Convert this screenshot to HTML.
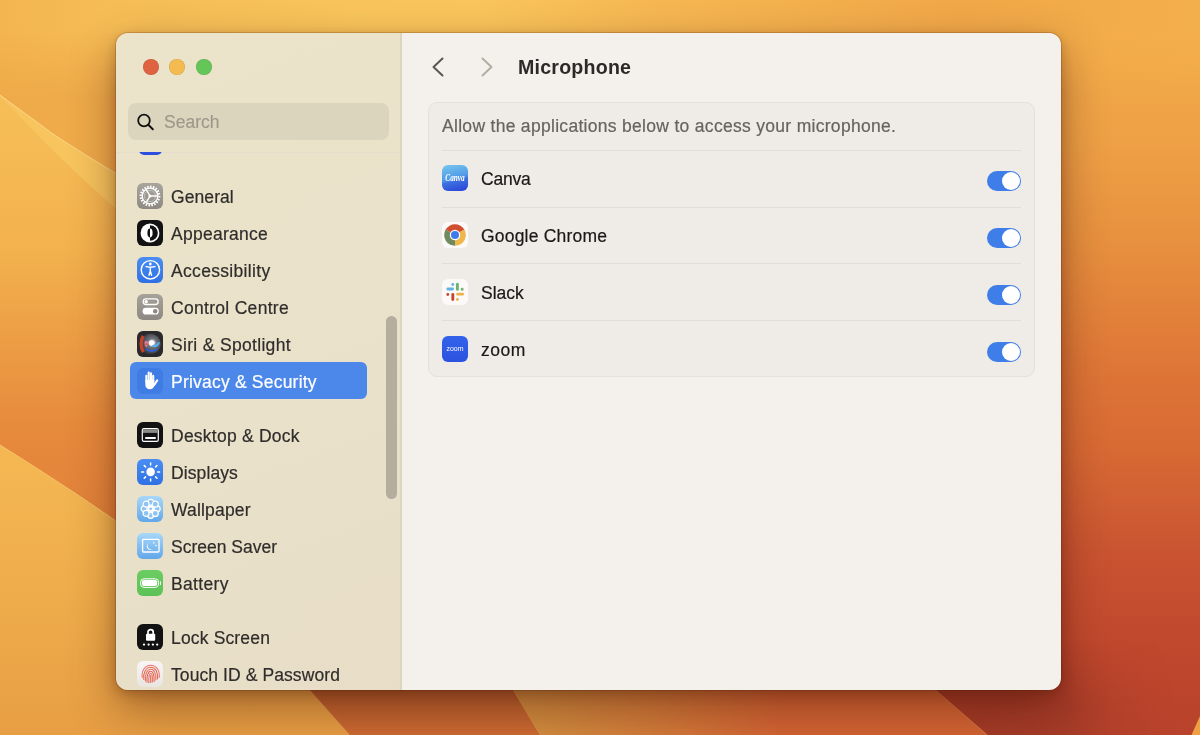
<!DOCTYPE html>
<html><head><meta charset="utf-8">
<style>
html,body{margin:0;padding:0;width:1200px;height:735px;overflow:hidden;background:#E99A44;font-family:"Liberation Sans",sans-serif;-webkit-font-smoothing:antialiased;}
#win{will-change:transform;}
#bg{position:absolute;left:0;top:0;width:1200px;height:735px;}
#win{position:absolute;left:116px;top:33px;width:945px;height:657px;border-radius:12px;overflow:hidden;box-shadow:0 0 0 1px rgba(80,30,0,.2),0 4px 12px rgba(60,15,0,.25),0 18px 46px rgba(60,15,0,.42);}
#side{position:absolute;left:0;top:0;width:284px;height:657px;background:linear-gradient(160deg,#EBE4CA 0%,#E9E1C9 55%,#E8DEC8 100%);}
#sep{position:absolute;left:284px;top:0;width:2px;height:657px;background:#DCD6BE;}
#main{position:absolute;left:286px;top:0;width:659px;height:657px;background:#F4F0EC;}
.tl{position:absolute;top:26px;width:16px;height:16px;border-radius:50%;box-shadow:inset 0 0 0 0.6px rgba(0,0,0,.12);}
#search{position:absolute;left:12px;top:70px;width:261px;height:37px;border-radius:8px;background:#DCD5BD;}
#search .ph{position:absolute;left:36px;top:1px;-webkit-text-stroke:0.15px currentColor;line-height:37px;font-size:17.5px;color:#9D988A;}
.it{position:absolute;left:21px;height:26px;}
.it svg{position:absolute;left:0;top:0;width:26px;height:26px;}
.it span{position:absolute;left:34px;top:0.5px;-webkit-text-stroke:0.2px currentColor;line-height:26px;font-size:17.5px;color:#2F2D2B;white-space:nowrap;}
#sel{position:absolute;left:14px;top:329px;width:237px;height:37px;border-radius:6px;background:#4C88EA;}
#scroll{position:absolute;left:270px;top:283px;width:11px;height:183px;border-radius:6px;background:#B5AE9F;}
.t{position:absolute;white-space:nowrap;}
#box{position:absolute;left:26px;top:69px;width:605px;height:273px;border-radius:9px;background:#EFEBE7;border:1px solid #E4E0DB;}
.hr{position:absolute;left:13px;width:579px;height:1px;background:#E1DDD8;}
.row{position:absolute;left:13px;width:580px;height:26px;}
.row svg.ic{position:absolute;left:0;top:0;width:26px;height:26px;}
.row span{position:absolute;left:39px;top:1px;-webkit-text-stroke:0.2px currentColor;line-height:26px;font-size:17.5px;color:#1A1918;white-space:nowrap;}
.tg{position:absolute;left:545px;top:6px;width:34px;height:20px;border-radius:10px;background:#3F7EE9;}
.tg i{position:absolute;right:1px;top:1px;width:18px;height:18px;border-radius:50%;background:#fff;}
</style></head>
<body>
<svg id="bg" viewBox="0 0 1200 735">
  <defs>
    <linearGradient id="gR" x1="0" y1="0" x2="0" y2="735" gradientUnits="userSpaceOnUse">
      <stop offset="0" stop-color="#F3AF4B"/>
      <stop offset="0.2" stop-color="#EEA045"/>
      <stop offset="0.34" stop-color="#E78F3E"/>
      <stop offset="0.5" stop-color="#DE7637"/>
      <stop offset="0.61" stop-color="#D86A34"/>
      <stop offset="0.75" stop-color="#C95431"/>
      <stop offset="0.88" stop-color="#BF482D"/>
      <stop offset="1" stop-color="#B8422B"/>
    </linearGradient>
    <linearGradient id="gTop" x1="0" y1="0" x2="1200" y2="0" gradientUnits="userSpaceOnUse">
      <stop offset="0" stop-color="#F3B54F"/>
      <stop offset="0.1" stop-color="#F6BD56"/>
      <stop offset="0.3" stop-color="#F9C55B"/>
      <stop offset="0.4" stop-color="#FAC55B"/>
      <stop offset="0.55" stop-color="#F6B752"/>
      <stop offset="0.8" stop-color="#F1A848"/>
      <stop offset="1" stop-color="#F3AF4B"/>
    </linearGradient>
    <linearGradient id="mTopG" x1="0" y1="0" x2="0" y2="100" gradientUnits="userSpaceOnUse">
      <stop offset="0.3" stop-color="#fff"/>
      <stop offset="1" stop-color="#000"/>
    </linearGradient>
    <mask id="mTop"><rect x="0" y="0" width="1200" height="100" fill="url(#mTopG)"/></mask>
    <linearGradient id="gL2" x1="0" y1="100" x2="0" y2="520" gradientUnits="userSpaceOnUse">
      <stop offset="0" stop-color="#F6BE58"/>
      <stop offset="0.35" stop-color="#F3B24E"/>
      <stop offset="0.78" stop-color="#E68A3C"/>
      <stop offset="1" stop-color="#E2823A"/>
    </linearGradient>
    <linearGradient id="gL3" x1="0" y1="445" x2="0" y2="735" gradientUnits="userSpaceOnUse">
      <stop offset="0" stop-color="#F4B853"/>
      <stop offset="0.5" stop-color="#EFAD4B"/>
      <stop offset="1" stop-color="#E79E44"/>
    </linearGradient>
    <linearGradient id="gB1" x1="0" y1="690" x2="0" y2="735" gradientUnits="userSpaceOnUse">
      <stop offset="0" stop-color="#B8602E"/>
      <stop offset="1" stop-color="#CE6B33"/>
    </linearGradient>
    <linearGradient id="gB2" x1="520" y1="0" x2="780" y2="0" gradientUnits="userSpaceOnUse">
      <stop offset="0" stop-color="#D29040"/>
      <stop offset="0.5" stop-color="#D27C3A"/>
      <stop offset="1" stop-color="#D26434"/>
    </linearGradient>
    <linearGradient id="mRedG" x1="0" y1="640" x2="0" y2="705" gradientUnits="userSpaceOnUse"><stop offset="0" stop-color="#000"/><stop offset="1" stop-color="#fff"/></linearGradient>
    <mask id="mRed"><rect x="0" y="600" width="1200" height="135" fill="url(#mRedG)"/></mask>
    <radialGradient id="gRed" cx="985" cy="720" r="190" gradientUnits="userSpaceOnUse">
      <stop offset="0" stop-color="#A33A27" stop-opacity="1"/>
      <stop offset="0.45" stop-color="#A63C28" stop-opacity="1"/>
      <stop offset="1" stop-color="#B8422B" stop-opacity="0"/>
    </radialGradient>
  </defs>
  <rect x="0" y="0" width="1200" height="735" fill="url(#gR)"/>
  <rect x="0" y="0" width="600" height="735" fill="#EFAA49"/>
  <rect x="0" y="0" width="1200" height="100" fill="url(#gTop)" mask="url(#mTop)"/>
  <!-- left strip -->
  <path d="M0,95 C20,110 40,124 50,132 C80,152 110,170 160,200 L160,735 L0,735 Z" fill="url(#gL2)"/>
  <path d="M0,95 C20,110 40,124 50,132 C80,152 110,170 160,200 L160,245 C120,215 60,160 0,96 Z" fill="#F7C45D"/>
  <path d="M0,95 C20,110 40,124 50,132 C80,152 110,170 160,200" fill="none" stroke="#FBD889" stroke-width="1"/>
  <path d="M0,445 C40,470 80,496 116,521 L160,551 L160,650 L290,650 L310,690 L350,735 L0,735 Z" fill="url(#gL3)"/>
  <path d="M0,445 C40,470 80,496 116,521" fill="none" stroke="#F6C468" stroke-width="1"/>
  <path d="M310,690 L350,735" stroke="#D9954A" stroke-width="1"/>
  <!-- bottom strip -->
  <path d="M290,650 L495,650 L513,690 L540,735 L350,735 L310,690 Z" fill="url(#gB1)"/>
  <path d="M495,650 L900,650 L935,690 L987,735 L540,735 L513,690 Z" fill="url(#gB2)"/>
  <path d="M880,640 L1200,640 L1200,735 L987,735 L935,690 Z" fill="url(#gRed)" mask="url(#mRed)"/>
  <path d="M935,690 L987,735" stroke="#D8703A" stroke-width="1.2"/>
  <path d="M1200,716 L1200,735 L1191.5,735 Z" fill="#EFA043"/>
</svg>

<div id="win">
  <div id="side">
    <div class="tl" style="left:27px;background:#DF6341;"></div>
    <div class="tl" style="left:53px;background:#F5BB50;"></div>
    <div class="tl" style="left:79.5px;background:#64C659;"></div>
    <div id="search">
      <svg style="position:absolute;left:8px;top:9px;width:20px;height:20px" viewBox="0 0 20 20"><circle cx="8" cy="8.5" r="5.8" fill="none" stroke="#111" stroke-width="1.8"/><path d="M12.3,12.8 L16.8,17.2" stroke="#111" stroke-width="2" stroke-linecap="round"/></svg>
      <span class="ph">Search</span>
    </div>
    <div style="position:absolute;left:0;top:119px;width:284px;height:1px;background:#E6DECA;"></div>
    <div style="position:absolute;left:23px;top:117px;width:23px;height:5px;border-radius:0 0 5px 5px;background:#2D4FE0;clip-path:inset(2px 0 0 0);"></div>

    <div id="sel"></div>
    <div id="scroll"></div>
    <div id="items">
<div class="it" style="top:150px"><svg viewBox="0 0 26 26"><defs><linearGradient id="ggen" x1="0" y1="0" x2="0" y2="1"><stop offset="0" stop-color="#A9A59D"/><stop offset="1" stop-color="#8E8A83"/></linearGradient></defs>
<rect x="0" y="0" width="26" height="26" rx="6" fill="url(#ggen)"/>
<circle cx="13" cy="13" r="9.3" fill="none" stroke="#fff" stroke-width="2.2" stroke-dasharray="1.6 1.3"/>
<circle cx="13" cy="13" r="7.8" fill="none" stroke="#fff" stroke-width="1.3"/>
<circle cx="13" cy="13" r="5.6" fill="none" stroke="#C9C6C0" stroke-width="0.8"/>
<path d="M13,13 L20.6,13 M13,13 L9.2,6.4 M13,13 L9.2,19.6" stroke="#fff" stroke-width="1.4"/>
<circle cx="13" cy="13" r="1.6" fill="#fff"/></svg><span style="letter-spacing:0.08px">General</span></div>
<div class="it" style="top:187px"><svg viewBox="0 0 26 26"><rect x="0" y="0" width="26" height="26" rx="6" fill="#121212"/>
<circle cx="13" cy="13" r="9.4" fill="#fff"/>
<path d="M13,5.2 A7.8,7.8 0 0 1 13,20.8 Z" fill="#121212"/>
<path d="M13,8.6 A2.6,4.4 0 0 0 13,17.4 Z" fill="#121212"/>
<path d="M13,8.6 A2.6,4.4 0 0 1 13,17.4 Z" fill="#fff"/></svg><span style="letter-spacing:0.26px">Appearance</span></div>
<div class="it" style="top:224px"><svg viewBox="0 0 26 26"><defs><linearGradient id="gacc" x1="0" y1="0" x2="0" y2="1"><stop offset="0" stop-color="#4A8EF2"/><stop offset="1" stop-color="#2F70E4"/></linearGradient></defs>
<rect x="0" y="0" width="26" height="26" rx="6" fill="url(#gacc)"/>
<circle cx="13.4" cy="12.8" r="9.2" fill="none" stroke="#fff" stroke-width="1.4"/>
<circle cx="13.3" cy="7" r="1.4" fill="#fff"/>
<path d="M9,9.6 L13.3,10.3 L18,9.6 M13.3,10.3 L13.3,14 L12,18.2 M13.3,14 L14.6,18.2" fill="none" stroke="#fff" stroke-width="1.4" stroke-linecap="round" stroke-linejoin="round"/></svg><span style="letter-spacing:0.32px">Accessibility</span></div>
<div class="it" style="top:261px"><svg viewBox="0 0 26 26"><defs><linearGradient id="gcc" x1="0" y1="0" x2="0" y2="1"><stop offset="0" stop-color="#A6A29A"/><stop offset="1" stop-color="#8D8982"/></linearGradient></defs>
<rect x="0" y="0" width="26" height="26" rx="6" fill="url(#gcc)"/>
<rect x="6.2" y="4.9" width="15" height="5.6" rx="2.8" fill="none" stroke="#fff" stroke-width="1.3"/>
<circle cx="9.2" cy="7.7" r="1.7" fill="#fff"/>
<rect x="5.6" y="13.8" width="16.2" height="6.8" rx="3.4" fill="#fff"/>
<circle cx="18.2" cy="17.2" r="2.2" fill="#8D8982"/></svg><span style="letter-spacing:0.3px">Control Centre</span></div>
<div class="it" style="top:298px"><svg viewBox="0 0 26 26"><defs><radialGradient id="gsiri" cx="0.58" cy="0.45" r="0.55"><stop offset="0" stop-color="#fff"/><stop offset="0.12" stop-color="#E8ECF2"/><stop offset="0.4" stop-color="#6E727C"/><stop offset="1" stop-color="#3A3B40"/></radialGradient><filter id="fsiri" x="-20%" y="-20%" width="140%" height="140%"><feGaussianBlur stdDeviation="0.6"/></filter></defs>
<rect x="0" y="0" width="26" height="26" rx="6" fill="#2A2A2C"/>
<circle cx="13.5" cy="13" r="10.2" fill="url(#gsiri)"/>
<g filter="url(#fsiri)">
<path d="M6.2,5 C3.2,9.5 3.4,16.5 6.4,21" fill="none" stroke="#C8432A" stroke-width="3.2"/>
<path d="M8,10 C7,12 7.5,15 9.5,16.5 C10.5,14.5 11.5,12 11.8,10.5 Z" fill="#E47AA0"/>
<path d="M8.5,14 C9.5,12.5 10.5,12.5 11.5,14" stroke="#D25A3A" stroke-width="1.2" fill="none"/>
<circle cx="14.6" cy="12" r="2.8" fill="#fff"/>
<path d="M15.5,14.4 C18,16 21,14.6 22,11.2" fill="none" stroke="#56AEF4" stroke-width="2.2"/>
<path d="M9,17.8 C11.5,20.8 17,20.8 20.2,18" fill="none" stroke="#2D5DE6" stroke-width="1.6"/>
</g></svg><span style="letter-spacing:0.32px">Siri &amp; Spotlight</span></div>
<div class="it" style="top:335px"><svg viewBox="0 0 26 26"><rect x="0" y="0" width="26" height="26" rx="6" fill="#3F7CE4"/>
<g stroke="#fff" stroke-width="2.1" stroke-linecap="round" fill="none">
<path d="M9.4,14 L9.4,7.7"/><path d="M11.7,13 L11.7,4.5"/><path d="M14,13 L14,5.4"/><path d="M16.2,14 L16.2,7.9"/><path d="M17.2,17 L20.2,12.4"/></g>
<path d="M8.35,12 L17.3,12 L17.3,17 C17.3,19.6 15.5,21.2 12.9,21.2 C10.2,21.2 8.35,19.5 8.35,17 Z" fill="#fff"/></svg><span style="color:#fff;letter-spacing:0.21px">Privacy &amp; Security</span></div>
<div class="it" style="top:389px"><svg viewBox="0 0 26 26"><rect x="0" y="0" width="26" height="26" rx="6" fill="#121212"/>
<rect x="5.3" y="6.7" width="16" height="12.6" rx="1.6" fill="none" stroke="#fff" stroke-width="1.2"/>
<rect x="5.9" y="7.3" width="14.8" height="3.6" fill="#8E8C88"/>
<rect x="8" y="15" width="11" height="2" rx="1" fill="#fff"/></svg><span style="letter-spacing:0.24px">Desktop &amp; Dock</span></div>
<div class="it" style="top:426px"><svg viewBox="0 0 26 26"><defs><linearGradient id="gdisp" x1="0" y1="0" x2="0" y2="1"><stop offset="0" stop-color="#4A8EF2"/><stop offset="1" stop-color="#2F70E4"/></linearGradient></defs>
<rect x="0" y="0" width="26" height="26" rx="6" fill="url(#gdisp)"/>
<circle cx="13.6" cy="12.9" r="4.3" fill="#fff"/>
<g stroke="#fff" stroke-width="1.5" stroke-linecap="round">
<path d="M13.6,3.9 L13.6,5.9 M13.6,19.9 L13.6,21.9 M4.6,12.9 L6.6,12.9 M20.6,12.9 L22.6,12.9 M7.2,6.5 L8.6,7.9 M18.6,17.9 L20,19.3 M7.2,19.3 L8.6,17.9 M18.6,7.9 L20,6.5"/></g></svg><span style="letter-spacing:0.1px">Displays</span></div>
<div class="it" style="top:463px"><svg viewBox="0 0 26 26"><defs><linearGradient id="gwal" x1="0" y1="0" x2="0" y2="1"><stop offset="0" stop-color="#A8D7F8"/><stop offset="1" stop-color="#62A7EA"/></linearGradient></defs>
<rect x="0" y="0" width="26" height="26" rx="6" fill="url(#gwal)"/>
<g fill="#8EC4F2" stroke="#fff" stroke-width="1.2">
<circle cx="13.7" cy="6.3" r="3"/><circle cx="13.7" cy="19.3" r="3"/><circle cx="7.2" cy="12.8" r="3"/><circle cx="20.2" cy="12.8" r="3"/>
<circle cx="9.1" cy="8.2" r="3"/><circle cx="18.3" cy="8.2" r="3"/><circle cx="9.1" cy="17.4" r="3"/><circle cx="18.3" cy="17.4" r="3"/></g>
<circle cx="13.7" cy="12.8" r="3.2" fill="#fff"/><circle cx="13.7" cy="12.8" r="1.4" fill="#8EC4F2"/></svg><span style="letter-spacing:0.18px">Wallpaper</span></div>
<div class="it" style="top:500px"><svg viewBox="0 0 26 26"><defs><linearGradient id="gss" x1="0" y1="0" x2="0" y2="1"><stop offset="0" stop-color="#A8D7F8"/><stop offset="1" stop-color="#62A7EA"/></linearGradient></defs>
<rect x="0" y="0" width="26" height="26" rx="6" fill="url(#gss)"/>
<rect x="5.6" y="6.4" width="16.4" height="12.6" rx="0.8" fill="none" stroke="#fff" stroke-width="1.3"/>
<path d="M12.2,9.6 A3.8,3.8 0 1 0 16.4,15.6 A3.2,3.2 0 0 1 12.2,9.6 Z" fill="#fff"/>
<circle cx="16.8" cy="9.8" r="0.8" fill="#fff"/><circle cx="19" cy="12.6" r="0.8" fill="#fff"/></svg><span style="letter-spacing:0px">Screen Saver</span></div>
<div class="it" style="top:537px"><svg viewBox="0 0 26 26"><defs><linearGradient id="gbat" x1="0" y1="0" x2="0" y2="1"><stop offset="0" stop-color="#6BCC62"/><stop offset="1" stop-color="#5DC256"/></linearGradient></defs>
<rect x="0" y="0" width="26" height="26" rx="6" fill="url(#gbat)"/>
<rect x="3.6" y="8.8" width="18" height="8.6" rx="3.4" fill="none" stroke="#fff" stroke-width="1"/>
<rect x="4.9" y="9.9" width="15.3" height="6" rx="2.2" fill="#fff"/>
<rect x="23" y="11.3" width="1" height="3.7" rx="0.5" fill="#fff"/></svg><span style="letter-spacing:0.35px">Battery</span></div>
<div class="it" style="top:591px"><svg viewBox="0 0 26 26"><rect x="0" y="0" width="26" height="26" rx="6" fill="#121212"/>
<path d="M11,10.5 L11,8 C11,4.7 16.2,4.7 16.2,8 L16.2,10.5" fill="none" stroke="#fff" stroke-width="1.7"/>
<rect x="9" y="9.8" width="9.2" height="6.9" rx="1" fill="#fff"/>
<g fill="#fff"><circle cx="7" cy="20.6" r="1.15"/><circle cx="11.6" cy="20.6" r="1.15"/><circle cx="15.9" cy="20.6" r="1.15"/><circle cx="20.2" cy="20.6" r="1.15"/></g></svg><span style="letter-spacing:0.16px">Lock Screen</span></div>
<div class="it" style="top:628px"><svg viewBox="0 0 26 26"><defs><linearGradient id="gtid" x1="0" y1="0" x2="0" y2="1"><stop offset="0" stop-color="#F8F6F4"/><stop offset="1" stop-color="#E9E5E1"/></linearGradient></defs>
<rect x="0" y="0" width="26" height="26" rx="6" fill="url(#gtid)"/>
<g fill="none" stroke-width="1.1" stroke-linecap="round">
<path d="M5.2,16.5 C4.4,9 8.5,4.2 13.7,4.2 C19,4.2 23,9 22.2,16.5" stroke="#E8707C"/>
<path d="M6.8,18.5 C6,11.5 9,6.2 13.7,6.2 C18.4,6.2 21.2,11 20.5,18" stroke="#E5683A"/>
<path d="M8.4,20 C7.8,13 10.2,8.2 13.7,8.2 C17.2,8.2 19.2,12.5 18.8,19" stroke="#E8707C"/>
<path d="M10,21.2 C9.6,14.5 11.3,10.2 13.7,10.2 C16,10.2 17.3,13.5 17.1,20.5" stroke="#E5683A"/>
<path d="M11.8,21.6 C11.5,16 12.3,12.2 13.7,12.2 C15,12.2 15.6,15 15.4,21" stroke="#E8707C"/>
<path d="M13.7,14.5 L13.7,21.5" stroke="#E5683A"/>
</g></svg><span style="letter-spacing:0.09px">Touch ID &amp; Password</span></div>
</div>
  </div>
  <div id="sep"></div>
  <div id="main">
    <svg style="position:absolute;left:28px;top:22px;width:16px;height:24px" viewBox="0 0 16 24"><path d="M12.5,3.5 L3.5,12 L12.5,20.5" fill="none" stroke="#5A5650" stroke-width="2" stroke-linecap="round" stroke-linejoin="round"/></svg>
    <svg style="position:absolute;left:77px;top:22px;width:16px;height:24px" viewBox="0 0 16 24"><path d="M3.5,3.5 L12.5,12 L3.5,20.5" fill="none" stroke="#B3ADA3" stroke-width="2" stroke-linecap="round" stroke-linejoin="round"/></svg>
    <div class="t" style="left:116px;top:22px;line-height:24px;font-size:19.6px;font-weight:bold;color:#2C2A28;letter-spacing:0.22px;">Microphone</div>
    <div id="box">
      <div class="t" style="left:13px;top:11px;-webkit-text-stroke:0.2px currentColor;line-height:24px;font-size:17.5px;color:#67635E;letter-spacing:0.3px;">Allow the applications below to access your microphone.</div>
      <div class="hr" style="top:47px"></div>
      <div class="row" style="top:62px"><svg class="ic" viewBox="0 0 26 26"><defs><linearGradient id="gcan" x1="0.3" y1="0" x2="0.55" y2="1"><stop offset="0" stop-color="#72C2EC"/><stop offset="0.5" stop-color="#509AE8"/><stop offset="0.64" stop-color="#3C6FE0"/><stop offset="1" stop-color="#2D4CD8"/></linearGradient></defs>
<rect width="26" height="26" rx="6" fill="url(#gcan)"/>
<text x="13" y="16" text-anchor="middle" font-family="Liberation Serif" font-style="italic" font-weight="bold" font-size="9.6" fill="#fff" textLength="19.5" lengthAdjust="spacingAndGlyphs">Canva</text></svg><span style="letter-spacing:-0.2px">Canva</span><div class="tg"><i></i></div></div>
      <div class="hr" style="top:104px"></div>
      <div class="row" style="top:119px"><svg class="ic" viewBox="0 0 26 26"><rect width="26" height="26" rx="6" fill="#FBFAF9"/>
<path d="M13,13 L3.65,7.6 A10.8,10.8 0 0 1 22.35,7.6 Z" fill="#D14D30"/>
<path d="M13,13 L22.35,7.6 A10.8,10.8 0 0 1 13,23.8 Z" fill="#EFB649"/>
<path d="M13,13 L13,23.8 A10.8,10.8 0 0 1 3.65,7.6 Z" fill="#6F8A5E"/>
<circle cx="13" cy="13" r="5.2" fill="#fff"/>
<circle cx="13" cy="13" r="4" fill="#3D7BE8"/></svg><span style="letter-spacing:0.2px">Google Chrome</span><div class="tg"><i></i></div></div>
      <div class="hr" style="top:160px"></div>
      <div class="row" style="top:176px"><svg class="ic" viewBox="0 0 26 26"><rect width="26" height="26" rx="6" fill="#FBFAF9"/>
<g stroke-linecap="round" stroke-width="2.8">
<path d="M10.8,5.4 L10.8,5.6" stroke="#62B2E6"/><path d="M5.8,10 L10.6,10" stroke="#62B2E6"/>
<path d="M15.4,5.2 L15.4,10.4" stroke="#6AB569"/><path d="M20.2,10.2 L20.2,10.4" stroke="#6AB569"/>
<path d="M15.6,15.2 L20.6,15.2" stroke="#EEB14A"/><path d="M15.4,20.4 L15.4,20.6" stroke="#EEB14A"/>
<path d="M10.8,15.4 L10.8,20.6" stroke="#C8432F"/><path d="M5.8,15.4 L5.8,15.6" stroke="#C8432F"/>
</g></svg><span>Slack</span><div class="tg"><i></i></div></div>
      <div class="hr" style="top:217px"></div>
      <div class="row" style="top:233px"><svg class="ic" viewBox="0 0 26 26"><defs><linearGradient id="gzm" x1="0" y1="0" x2="0" y2="1"><stop offset="0" stop-color="#3363EA"/><stop offset="1" stop-color="#2B52E0"/></linearGradient></defs><rect width="26" height="26" rx="6" fill="url(#gzm)"/>
<text x="13" y="15.4" text-anchor="middle" font-family="Liberation Sans" font-size="7.4" fill="#fff" textLength="17" lengthAdjust="spacingAndGlyphs">zoom</text></svg><span style="letter-spacing:0.5px">zoom</span><div class="tg"><i></i></div></div>
    </div>
  </div>
</div>
</body></html>
